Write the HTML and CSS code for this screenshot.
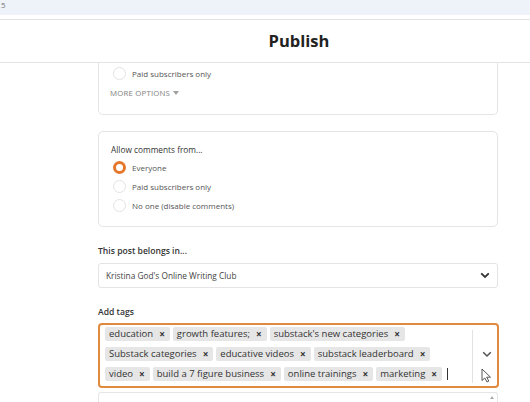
FILE: index.html
```html
<!DOCTYPE html>
<html>
<head>
<meta charset="utf-8">
<link rel="stylesheet" href="styles.css">
</head>
<body>
<div class="topbar"><span class="tabnum">5</span></div>
<header class="header"><h1 class="title">Publish</h1></header>
<main class="content">
  <section class="card card-clipped">
    <label class="radio-row"><span class="radio"></span><span class="radio-text">Paid subscribers only</span></label>
    <div class="more">MORE OPTIONS <span class="caret"></span></div>
  </section>

  <section class="card card-comments">
    <div class="card-label">Allow comments from...</div>
    <label class="radio-row"><span class="radio radio-on"></span><span class="radio-text">Everyone</span></label>
    <label class="radio-row"><span class="radio"></span><span class="radio-text">Paid subscribers only</span></label>
    <label class="radio-row"><span class="radio"></span><span class="radio-text">No one (disable comments)</span></label>
  </section>

  <div class="field-label">This post belongs in...</div>
  <div class="select">
    <span class="select-text">Kristina God's Online Writing Club</span>
    <svg class="chev" width="10" height="7" viewBox="0 0 10 7"><path d="M1.2 1.3 L5 5 L8.8 1.3" fill="none" stroke="#333" stroke-width="1.8"/></svg>
  </div>

  <div class="field-label tags-label">Add tags</div>
  <div class="tagbox">
    <div class="tags">
      <span class="tag">education<span class="x">×</span></span>
      <span class="tag">growth features;<span class="x">×</span></span>
      <span class="tag">substack's new categories<span class="x">×</span></span>
      <span class="tag">Substack categories<span class="x">×</span></span>
      <span class="tag">educative videos<span class="x">×</span></span>
      <span class="tag">substack leaderboard<span class="x">×</span></span>
      <span class="tag">video<span class="x">×</span></span>
      <span class="tag">build a 7 figure business<span class="x">×</span></span>
      <span class="tag">online trainings<span class="x">×</span></span>
      <span class="tag">marketing<span class="x">×</span></span>
      <span class="caret-line"></span>
    </div>
    <div class="tag-side">
      <svg class="chev" width="10" height="7" viewBox="0 0 10 7"><path d="M1.2 1.3 L5 5 L8.8 1.3" fill="none" stroke="#555" stroke-width="1.6"/></svg>
      <svg class="pointer" width="11" height="15" viewBox="0 0 11 15"><path d="M1 1 L1 12.5 L3.8 10 L6 14 L7.8 13.1 L5.7 9.2 L9.5 9.2 Z" fill="#fff" stroke="#444" stroke-width="0.9" stroke-linejoin="round"/></svg>
    </div>
  </div>
  <div class="below">
    <span class="scroll-up"></span>
  </div>
</main>
</body>
</html>
```
FILE: styles.css
```css
* { box-sizing: border-box; }
html, body { margin: 0; padding: 0; background: #fff; overflow: hidden; }
body {
  font-family: "Open Sans", "Noto Sans", sans-serif;
  color: #333;
  width: 530px;
  height: 402px;
}
.topbar {
  height: 15px;
  background: #eef2f9;
  margin-bottom: 4px;
  position: relative;
}
.tabnum {
  position: absolute;
  left: 1px;
  top: 0;
  font-size: 8px;
  line-height: 10px;
  color: #777;
}
.header {
  height: 44px;
  border-top: 1px solid #e3e3e3;
  border-bottom: 1px solid #e3e3e3;
  display: flex;
  align-items: center;
  justify-content: center;
  padding-left: 68px;
}
.title {
  margin: 0;
  font-size: 16.5px;
  font-weight: 700;
  color: #222;
  line-height: 20px;
  padding-bottom: 1px;
}
.content {
  margin-left: 98px;
  width: 400px;
  display: flex;
  flex-direction: column;
}
.card {
  border: 1px solid #e4e4e4;
  border-radius: 5px;
  padding: 0 12px;
}
.card-clipped {
  border-top: none;
  border-top-left-radius: 0;
  border-top-right-radius: 0;
  padding-top: 2px;
  height: 53px;
  margin-top: -1px;
}
.radio-row {
  display: flex;
  align-items: center;
  height: 19px;
  padding-left: 2px;
}
.radio {
  width: 13px;
  height: 13px;
  border-radius: 50%;
  border: 1px solid #e3e3e3;
  background: #fff;
  margin-right: 6px;
  flex: none;
}
.radio-on {
  border: 3px solid #e6782e;
}
.radio-text {
  font-size: 8px;
  color: #555;
}
.more {
  font-size: 7.8px;
  color: #808080;
  letter-spacing: 0.2px;
  margin-top: 5px;
  margin-left: -1px;
  display: flex;
  align-items: center;
}
.caret {
  display: inline-block;
  width: 0;
  height: 0;
  border-left: 3.5px solid transparent;
  border-right: 3.5px solid transparent;
  border-top: 4px solid #a0a0a0;
  margin-left: 3px;
}
.card-comments {
  margin-top: 16px;
  height: 96px;
  padding-top: 10px;
}
.card-label {
  font-size: 8.3px;
  color: #333;
  height: 16px;
  line-height: 16px;
  margin-bottom: 0;
}
.field-label {
  font-size: 8.6px;
  color: #333;
  margin-top: 17px;
  height: 14px;
  line-height: 14px;
  font-weight: 600;
}
.select {
  margin-top: 5px;
  height: 25px;
  border: 1px solid #e4e4e4;
  border-radius: 3px;
  display: flex;
  align-items: center;
  justify-content: space-between;
  padding: 0 7px 0 7px;
}
.select-text {
  font-size: 8.3px;
  color: #444;
}
.tags-label {
  margin-top: 17px;
}
.tagbox {
  margin-top: 4px;
  width: 401px;
  height: 65px;
  border: 2px solid #df8a3e;
  border-radius: 4px;
  display: flex;
  padding: 2px 0 2px 5px;
}
.tags {
  flex: 1;
  display: flex;
  flex-wrap: wrap;
  align-content: flex-start;
  gap: 6px 3px;
  padding-right: 12px;
  padding-top: 0;
}
.tag {
  height: 14px;
  background: #e6e6e6;
  border-radius: 2px;
  font-size: 9.5px;
  line-height: 14px;
  color: #333;
  padding: 0 5px 0 4px;
  display: inline-flex;
  align-items: center;
}
.x {
  font-size: 10px;
  font-weight: 700;
  margin-left: 6px;
  color: #333;
}
.caret-line {
  width: 1px;
  height: 12px;
  background: #333;
  margin: 1px 0 0 2px;
}
.tag-side {
  width: 25px;
  border-left: 1px solid #e2e2e2;
  margin: 3px 0 1px;
  display: flex;
  flex-direction: column;
  align-items: center;
  justify-content: flex-end;
  gap: 10px;
  padding-left: 3px;
}
.below {
  margin-top: 4px;
  height: 20px;
  border: 1px solid #e6e6e6;
  border-bottom: none;
  border-radius: 3px 3px 0 0;
  position: relative;
}
.scroll-up {
  position: absolute;
  right: 3px;
  top: 3px;
  width: 0;
  height: 0;
  border-left: 2px solid transparent;
  border-right: 2px solid transparent;
  border-bottom: 3px solid #aaa;
}
```
